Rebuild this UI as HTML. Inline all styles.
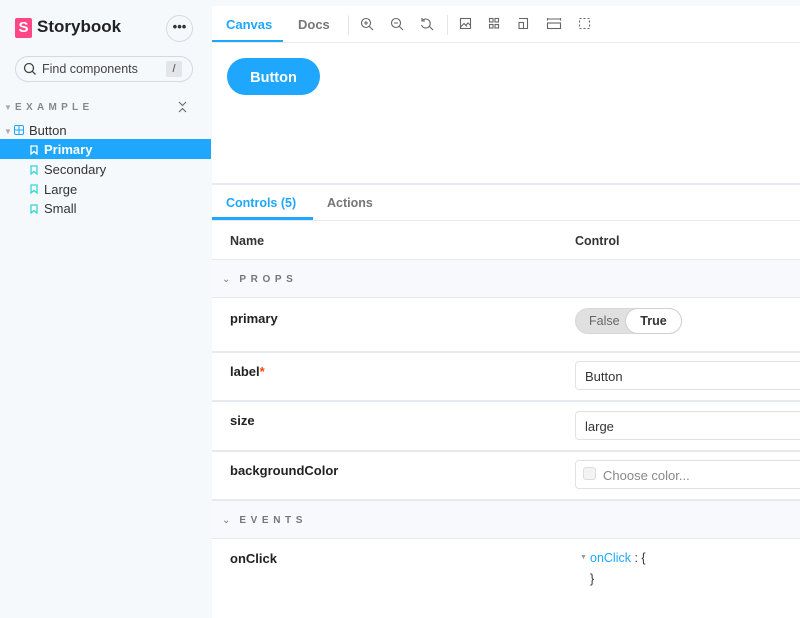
<!DOCTYPE html>
<html><head><meta charset="utf-8"><style>
*{box-sizing:border-box;margin:0;padding:0}
body{width:800px;height:618px;overflow:hidden;background:#f6f9fc;font-family:"Liberation Sans",sans-serif;position:relative;color:#333}
.a{position:absolute}
.side{left:0;top:0;width:211px;height:618px;background:#f6f9fc}
.main{left:212px;top:6px;width:588px;height:612px;background:#fff}
.hl{position:absolute;left:0;right:0;height:1px;background:#e6e9ed}
.b{font-weight:bold;font-size:13px;color:#222}
.inp{position:absolute;left:363px;width:240px;height:29px;border:1px solid #dfe3e8;border-radius:4px;background:#fff;font-size:13px;padding:7px 9px;color:#333}
.sec{position:absolute;left:0;right:0;background:#f7f9fc;font-size:10px;font-weight:bold;letter-spacing:4.6px;color:#777}
.tree{position:absolute;font-size:13px;color:#333}
</style></head><body>
<div class="a side">
  <div class="a" style="left:15px;top:18px;width:17px;height:20px;background:#ff4785;border-radius:2px;color:#fff;font-weight:bold;font-size:15px;text-align:center;line-height:20px">S</div>
  <div class="a" style="left:37px;top:17px;font-size:17px;font-weight:bold;color:#222">Storybook</div>
  <div class="a" style="left:166px;top:15px;width:27px;height:27px;border:1px solid #d5d9de;border-radius:50%;text-align:center;font-size:13px;font-weight:bold;line-height:22px;color:#333">•••</div>
  <div class="a" style="left:15px;top:56px;width:178px;height:26px;border:1px solid #d5d9de;border-radius:13px;background:#f6f9fc"></div>
  <svg class="a" style="left:23px;top:62px" width="14" height="14" viewBox="0 0 14 14"><circle cx="6" cy="6" r="4.5" fill="none" stroke="#444" stroke-width="1.3"/><path d="M9.3 9.3L12.5 12.5" stroke="#444" stroke-width="1.3"/></svg>
  <div class="a" style="left:42px;top:62px;font-size:12.5px;color:#444">Find components</div>
  <div class="a" style="left:166px;top:61px;width:16px;height:16px;background:#e3e5e8;border-radius:2px;font-size:11px;text-align:center;line-height:16px;color:#444">/</div>
  <div class="a" style="left:4px;top:103px;font-size:8px;color:#aaa">▼</div>
  <div class="a" style="left:15px;top:102px;font-size:10px;font-weight:bold;letter-spacing:4.3px;color:#888">EXAMPLE</div>
  <svg class="a" style="left:178px;top:101px" width="9" height="12" viewBox="0 0 9 12" fill="none" stroke="#666" stroke-width="1.1"><path d="M1 1L4.5 4.5L8 1M1 11L4.5 7.5L8 11"/></svg>
  <div class="a" style="left:4px;top:127px;font-size:8px;color:#aaa">▼</div>
  <svg class="a" style="left:14px;top:125px" width="10" height="10" viewBox="0 0 10 10"><rect x="0.5" y="0.5" width="9" height="9" rx="1.5" fill="none" stroke="#1ea7fd"/><path d="M5 0.5V9.5M0.5 5H9.5" stroke="#1ea7fd"/></svg>
  <div class="tree" style="left:29px;top:123px">Button</div>
  <div class="a" style="left:0;top:139px;width:211px;height:20px;background:#1ea7fd"></div>
  <div class="tree" style="left:44px;top:142px;color:#fff;font-weight:bold">Primary</div>
  <div class="tree" style="left:44px;top:162px">Secondary</div>
  <div class="tree" style="left:44px;top:182px">Large</div>
  <div class="tree" style="left:44px;top:201px">Small</div>
  <svg class="a" style="left:30px;top:145px" width="8" height="10"><path d="M1 1H7V9L4 6.5L1 9Z" fill="none" stroke="#fff" stroke-width="1.3"/></svg>
  <svg class="a" style="left:30px;top:165px" width="8" height="10"><path d="M1 1H7V9L4 6.5L1 9Z" fill="none" stroke="#37d5d3" stroke-width="1.3"/></svg>
  <svg class="a" style="left:30px;top:184px" width="8" height="10"><path d="M1 1H7V9L4 6.5L1 9Z" fill="none" stroke="#37d5d3" stroke-width="1.3"/></svg>
  <svg class="a" style="left:30px;top:204px" width="8" height="10"><path d="M1 1H7V9L4 6.5L1 9Z" fill="none" stroke="#37d5d3" stroke-width="1.3"/></svg>
</div>
<div class="a main">
  <div class="a" style="left:14px;top:11px;font-size:13px;font-weight:bold;color:#1ea7fd">Canvas</div>
  <div class="a" style="left:86px;top:11px;font-size:13px;font-weight:bold;color:#777">Docs</div>
  <div class="a" style="left:0;top:34px;width:71px;height:3px;background:#1ea7fd"></div>
  <div class="a" style="left:136px;top:9px;width:1px;height:20px;background:#e3e5e8"></div>
  <div class="a" style="left:235px;top:9px;width:1px;height:20px;background:#e3e5e8"></div>
  <svg class="a" style="left:148px;top:11px" width="240" height="16" viewBox="0 0 240 16" fill="none" stroke="#666" stroke-width="1.1">
    <circle cx="6" cy="6" r="4.5"/><path d="M9.5 9.5L13 13M4 6H8M6 4V8"/>
    <circle cx="36" cy="6" r="4.5"/><path d="M39.5 9.5L43 13M34 6H38"/>
    <path d="M62 4A4.5 4.5 0 1 1 61.5 8M62 1V4H65M69.5 9.5L73 13"/>
    <rect x="100.5" y="1.5" width="10" height="10"/><path d="M100.5 10L104 6.5L107 9.5M106 8L108 6L110.5 8.5"/>
    <rect x="129.5" y="1.5" width="3.5" height="3.5"/><rect x="135" y="1.5" width="3.5" height="3.5"/><rect x="129.5" y="7.5" width="3.5" height="3.5"/><rect x="135" y="7.5" width="3.5" height="3.5"/>
    <path d="M159 1.5H167.5V11.5H159"/><rect x="159" y="5.5" width="4.5" height="6"/>
    <path d="M187.5 2H200.5M187.5 1V3.5M200.5 1V3.5"/><rect x="187.5" y="6" width="13" height="5.5"/>
    <rect x="219.5" y="1.5" width="10" height="10" stroke-dasharray="2 2"/>
  </svg>
  <div class="hl" style="top:36px"></div>
  <div class="a" style="left:15px;top:52px;width:93px;height:37px;background:#1ea7fd;border-radius:19px;color:#fff;font-weight:bold;font-size:14.5px;text-align:center;line-height:40px">Button</div>
  <div class="hl" style="top:177px;height:2px"></div>
  <div class="a" style="left:14px;top:190px;font-size:12.5px;font-weight:bold;color:#1ea7fd">Controls (5)</div>
  <div class="a" style="left:115px;top:190px;font-size:12.5px;font-weight:bold;color:#777">Actions</div>
  <div class="a" style="left:0;top:211px;width:101px;height:3px;background:#1ea7fd"></div>
  <div class="hl" style="top:214px"></div>
  <div class="a b" style="left:18px;top:228px;font-size:12.5px;font-weight:bold;color:#333">Name</div>
  <div class="a" style="left:363px;top:228px;font-size:12.5px;font-weight:bold;color:#333">Control</div>
  <div class="hl" style="top:253px"></div>
  <div class="sec" style="top:254px;height:37px;padding:14px 0 0 10px"><span style="letter-spacing:0;font-weight:normal;margin-right:9px">⌄</span>PROPS</div>
  <div class="hl" style="top:291px"></div>
  <div class="a b" style="left:18px;top:305px">primary</div>
  <div class="a" style="left:363px;top:302px;width:107px;height:26px;border-radius:13px;background:#e0e0e0;border:1px solid #d8d8d8"></div>
  <div class="a" style="left:377px;top:308px;font-size:12.5px;color:#666">False</div>
  <div class="a" style="left:414px;top:303px;width:55px;height:24px;border-radius:12px;background:#fff;box-shadow:0 0 0 1px #d0d0d0;font-size:12.5px;font-weight:bold;text-align:center;line-height:24px;color:#333">True</div>
  <div class="hl" style="top:345px;height:2px"></div>
  <div class="a b" style="left:18px;top:358px">label<span style="color:#ff4400">*</span></div>
  <div class="inp" style="top:355px">Button</div>
  <div class="hl" style="top:394px;height:2px"></div>
  <div class="a b" style="left:18px;top:407px">size</div>
  <div class="inp" style="top:405px">large</div>
  <div class="hl" style="top:444px;height:2px"></div>
  <div class="a b" style="left:18px;top:457px">backgroundColor</div>
  <div class="inp" style="top:454px;padding-left:27px;color:#888">Choose color...</div>
  <div class="a" style="left:371px;top:461px;width:13px;height:13px;border:1px solid #ddd;border-radius:3px;background:#f3f3f3"></div>
  <div class="hl" style="top:493px;height:2px"></div>
  <div class="sec" style="top:495px;height:37px;padding:14px 0 0 10px"><span style="letter-spacing:0;font-weight:normal;margin-right:9px">⌄</span>EVENTS</div>
  <div class="hl" style="top:532px"></div>
  <div class="a b" style="left:18px;top:545px">onClick</div>
  <div class="a" style="left:368px;top:548px;font-size:7px;color:#999">▼</div>
  <div class="a" style="left:378px;top:545px;font-size:12.5px;color:#1ea7fd">onClick<span style="color:#333"> : {</span></div>
  <div class="a" style="left:378px;top:566px;font-size:12.5px;color:#333">}</div>
</div>
</body></html>
